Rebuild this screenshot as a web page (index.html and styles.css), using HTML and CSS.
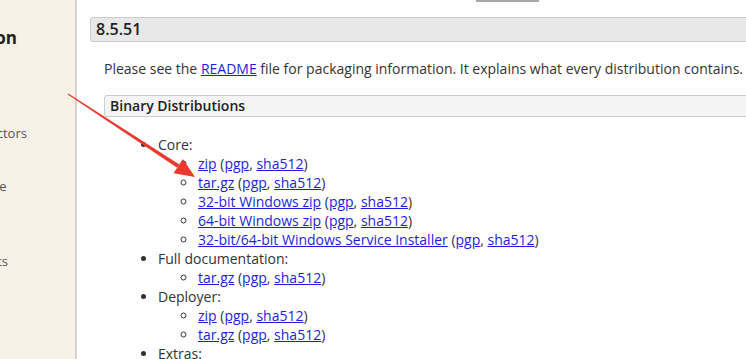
FILE: index.html
```html
<!DOCTYPE html>
<html lang="en">
<head>
<meta charset="UTF-8">
<title>Apache Tomcat 8 Software Downloads</title>
<link rel="stylesheet" href="styles.css">
</head>
<body>
<div class="page">
  <div class="sidebar">
    <div class="nav-scroll">
      <h2 class="nav-title">Documentation</h2>
      <ul class="nav-list">
        <li>Taglibs</li>
        <li>Maven Plugin</li>
        <li>Tomcat Connectors</li>
        <li>Taglibs</li>
        <li>Migration Guide</li>
        <li>Archives</li>
      </ul>
      <ul class="nav-list nav-group">
        <li>Security Reports</li>
        <li>Bug Database</li>
      </ul>
    </div>
  </div>

  <div class="main">
    <div class="top-edge"></div>

    <h3 class="version">8.5.51</h3>
    <div class="section">
      <p>Please see the <a href="#">README</a> file for packaging information. It explains what every distribution contains.</p>

      <h4 class="subhead">Binary Distributions</h4>
      <div class="text">
        <ul>
          <li>Core:
            <ul>
              <li><a href="#">zip</a> (<a href="#">pgp</a>, <a href="#">sha512</a>)</li>
              <li><a href="#">tar.gz</a> (<a href="#">pgp</a>, <a href="#">sha512</a>)</li>
              <li><a href="#">32-bit Windows zip</a> (<a href="#">pgp</a>, <a href="#">sha512</a>)</li>
              <li><a href="#">64-bit Windows zip</a> (<a href="#">pgp</a>, <a href="#">sha512</a>)</li>
              <li><a href="#">32-bit/64-bit Windows Service Installer</a> (<a href="#">pgp</a>, <a href="#">sha512</a>)</li>
            </ul>
          </li>
          <li>Full documentation:
            <ul>
              <li><a href="#">tar.gz</a> (<a href="#">pgp</a>, <a href="#">sha512</a>)</li>
            </ul>
          </li>
          <li>Deployer:
            <ul>
              <li><a href="#">zip</a> (<a href="#">pgp</a>, <a href="#">sha512</a>)</li>
              <li><a href="#">tar.gz</a> (<a href="#">pgp</a>, <a href="#">sha512</a>)</li>
            </ul>
          </li>
          <li>Extras:</li>
        </ul>
      </div>
    </div>
  </div>
</div>

<!-- annotation arrow drawn over the page -->
<svg class="arrow" width="746" height="359" viewBox="0 0 746 359">
  <polygon fill="#ea3a2f" points="67.7,94.4 68.3,93.6 179.4,164.4 177.2,167.8" />
  <polygon fill="#ea3a2f" points="195,177 173.6,173.2 182.9,159" />
</svg>
</body>
</html>
```

FILE: styles.css
```css
html, body {
  margin: 0;
  padding: 0;
  overflow: hidden;
}

body {
  font-family: 'Open Sans', 'Liberation Sans', sans-serif;
  font-size: 14px;
  color: #333;
  background: #fff;
}

.page {
  display: flex;
  width: 1200px;
  height: 359px;
}

/* left navigation, scrolled partly out of view */
.sidebar {
  width: 75px;
  flex-shrink: 0;
  background-color: #f8f1e5;
  border-right: 2px solid #d6d2cc;
  overflow: hidden;
}

.nav-scroll {
  margin-left: -116px;
  padding-top: 26px;
  white-space: nowrap;
}

.nav-title {
  font-size: 17px;
  font-weight: bold;
  color: #222;
  margin: 0 0 18px 0;
}

.nav-list {
  list-style: none;
  margin: 0;
  padding-left: 25px;
  font-size: 13px;
  color: #555;
}

.nav-list li {
  line-height: 26.5px;
}

.nav-group {
  margin-top: 22px;
}

.main {
  flex: 1;
  padding-left: 13px;
}

.top-edge {
  width: 63px;
  height: 2px;
  margin-left: 386px;
  background-color: #a8a8a8;
}

.version {
  margin: 15px 0 0 0;
  padding: 0 5px;
  height: 23px;
  line-height: 23px;
  font-size: 16px;
  font-weight: 600;
  color: #222;
  background-color: #e8e8e8;
  border: 1px solid #ccc;
  border-radius: 3px;
}

.section {
  padding-left: 14px;
}

.section p {
  margin: 17px 0 0 0;
  line-height: 19px;
}

a {
  color: #1d1de0;
  text-decoration: underline;
}

.subhead {
  margin: 17px 0 0 0;
  padding: 0 5px;
  height: 20px;
  line-height: 20px;
  font-size: 14px;
  font-weight: 600;
  color: #222;
  background-color: #f4f4f4;
  border: 1px solid #ccc;
  border-radius: 3px;
}

.text {
  padding-left: 14px;
}

.text ul {
  margin: 0;
  padding-left: 40px;
  line-height: 19px;
}

.text > ul {
  margin-top: 18px;
  list-style-type: disc;
}

.text ul ul {
  list-style-type: circle;
}

.arrow {
  position: absolute;
  left: 0;
  top: 0;
  pointer-events: none;
}
```
